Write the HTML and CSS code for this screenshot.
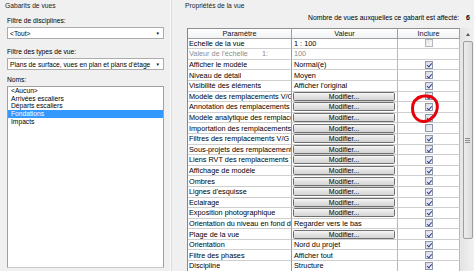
FILE: index.html
```html
<!DOCTYPE html>
<html lang="fr">
<head>
<meta charset="utf-8">
<title>Gabarits de vues</title>
<link rel="stylesheet" href="styles.css">
</head>
<body>
<div class="app">
  <section class="left">
    <div class="group-title">Gabarits de vues</div>
    <div class="left-body">
      <div class="label l1">Filtre de disciplines:</div>
      <div class="combo c1"><span>&lt;Tout&gt;</span><span class="arrow">&#9660;</span></div>
      <div class="label l2">Filtre des types de vue:</div>
      <div class="combo c2"><span>Plans de surface, vues en plan et plans d'étage</span><span class="arrow">&#9660;</span></div>
      <div class="label l3">Noms:</div>
      <ul class="list">
        <li>&lt;Aucun&gt;</li>
        <li>Arrivées escaliers</li>
        <li>Départs escaliers</li>
        <li class="sel">Fondations</li>
        <li>Impacts</li>
      </ul>
    </div>
  </section>
  <div class="splitter"></div>
  <section class="right">
    <div class="group-title">Propriétés de la vue</div>
    <div class="count"><span>Nombre de vues auxquelles ce gabarit est affecté:</span><b>6</b></div>
    <div class="table-wrap">
      <div class="grid">
        <div class="hd">Paramètre</div><div class="hd">Valeur</div><div class="hd">Inclure</div>

        <div class="c p"><span class="t">Echelle de la vue</span></div><div class="c v">1 : 100</div><div class="c i"><span class="cb off dis"></span></div>
        <div class="c p gray"><span class="t">Valeur de l'échelle<span class="tab">1:</span></span></div><div class="c v gray">100</div><div class="c i"></div>
        <div class="c p"><span class="t">Afficher le modèle</span></div><div class="c v">Normal(e)</div><div class="c i"><span class="cb"></span></div>
        <div class="c p"><span class="t">Niveau de détail</span></div><div class="c v">Moyen</div><div class="c i"><span class="cb"></span></div>
        <div class="c p"><span class="t">Visibilité des éléments</span></div><div class="c v">Afficher l'original</div><div class="c i"><span class="cb"></span></div>
        <div class="c p"><span class="t">Modèle des remplacements V/G</span></div><div class="c v"><span class="btn">Modifier...</span></div><div class="c i"><span class="cb"></span></div>
        <div class="c p"><span class="t">Annotation des remplacements</span></div><div class="c v"><span class="btn">Modifier...</span></div><div class="c i"><span class="cb"></span></div>
        <div class="c p"><span class="t">Modèle analytique des remplacements</span></div><div class="c v"><span class="btn">Modifier...</span></div><div class="c i"><span class="cb"></span></div>
        <div class="c p"><span class="t">Importation des remplacements</span></div><div class="c v"><span class="btn">Modifier...</span></div><div class="c i"><span class="cb off"></span></div>
        <div class="c p"><span class="t">Filtres des remplacements V/G</span></div><div class="c v"><span class="btn">Modifier...</span></div><div class="c i"><span class="cb"></span></div>
        <div class="c p"><span class="t">Sous-projets des remplacements</span></div><div class="c v"><span class="btn">Modifier...</span></div><div class="c i"><span class="cb"></span></div>
        <div class="c p"><span class="t">Liens RVT des remplacements V/G</span></div><div class="c v"><span class="btn">Modifier...</span></div><div class="c i"><span class="cb"></span></div>
        <div class="c p"><span class="t">Affichage de modèle</span></div><div class="c v"><span class="btn">Modifier...</span></div><div class="c i"><span class="cb"></span></div>
        <div class="c p"><span class="t">Ombres</span></div><div class="c v"><span class="btn">Modifier...</span></div><div class="c i"><span class="cb"></span></div>
        <div class="c p"><span class="t">Lignes d'esquisse</span></div><div class="c v"><span class="btn">Modifier...</span></div><div class="c i"><span class="cb"></span></div>
        <div class="c p"><span class="t">Eclairage</span></div><div class="c v"><span class="btn">Modifier...</span></div><div class="c i"><span class="cb"></span></div>
        <div class="c p"><span class="t">Exposition photographique</span></div><div class="c v"><span class="btn">Modifier...</span></div><div class="c i"><span class="cb"></span></div>
        <div class="c p"><span class="t">Orientation du niveau en fond de plan</span></div><div class="c v">Regarder vers le bas</div><div class="c i"><span class="cb"></span></div>
        <div class="c p"><span class="t">Plage de la vue</span></div><div class="c v"><span class="btn">Modifier...</span></div><div class="c i"><span class="cb"></span></div>
        <div class="c p"><span class="t">Orientation</span></div><div class="c v">Nord du projet</div><div class="c i"><span class="cb"></span></div>
        <div class="c p"><span class="t">Filtre des phases</span></div><div class="c v">Afficher tout</div><div class="c i"><span class="cb"></span></div>
        <div class="c p"><span class="t">Discipline</span></div><div class="c v">Structure</div><div class="c i"><span class="cb"></span></div>
      </div>
      <div class="scrollbar">
        <div class="sb-up"><span class="up-arrow"></span></div>
        <div class="sb-thumb"><span class="grip"></span></div>
      </div>
      <svg class="mark" width="40" height="32" viewBox="0 0 40 32">
        <path d="M13 4.5 C17 2.5 27 1.5 31 8 C34 14 32 24 22 28 C13 30.5 7.5 23 7.5 15.5 C7.5 9 11 5 17 3.5" fill="none" stroke="#e8000b" stroke-width="3" stroke-linecap="round"/>
      </svg>
    </div>
  </section>
</div>
</body>
</html>
```

FILE: styles.css
```css
* { box-sizing: border-box; }
html, body {
  margin: 0;
  padding: 0;
}
body {
  width: 474px;
  height: 271px;
  overflow: hidden;
  background: #f0f0f0;
  font-family: "Liberation Sans", Arial, sans-serif;
  color: #000;
}
.app {
  display: flex;
  height: 271px;
}

/* ---------- left panel ---------- */
.left {
  width: 172px;
  flex: none;
  border-right: 1px solid #dcdcdc;
  box-shadow: inset -1px 0 0 #fafafa;
}
.group-title {
  height: 12px;
  line-height: 12px;
  font-size: 6.7px;
  color: #222;
  padding-left: 5px;
}
.left-body {
  padding-left: 7px;
  width: 164px;
  font-size: 6.7px;
}
.label {
  height: 10px;
  line-height: 10px;
}
.l1 { margin-top: 4px; }
.l2 { margin-top: 8px; }
.l3 { margin-top: 5px; }
.combo {
  margin-top: 1px;
  height: 12px;
  background: #fff;
  border: 1px solid #acacac;
  display: flex;
  align-items: center;
  justify-content: space-between;
  padding: 0 3px 0 2px;
  white-space: nowrap;
  overflow: hidden;
}
.combo .arrow {
  font-size: 4.5px;
  color: #111;
}
.list {
  list-style: none;
  margin: 1px 0 0;
  padding: 0;
  height: 182px;
  background: #fff;
  border: 1px solid #a0a0a0;
  border-bottom-color: #c8c8c8;
}
.list li {
  height: 7.7px;
  line-height: 7.7px;
  padding-left: 3px;
  white-space: nowrap;
}
.list li.sel {
  background: #3399ff;
  color: #fff;
}

.splitter {
  width: 6px;
  flex: none;
}

/* ---------- right panel ---------- */
.right {
  flex: 1;
  padding-left: 7px;
  display: flex;
  flex-direction: column;
}
.right .group-title { padding-left: 0; }
.count {
  height: 10px;
  line-height: 10px;
  margin-top: 1px;
  font-size: 6.8px;
  display: flex;
  justify-content: flex-end;
  gap: 7px;
  padding-right: 4px;
}
.count b { font-size: 7px; }

.table-wrap {
  position: relative;
  margin-top: 5px;
  margin-left: 2px;
  display: flex;
  flex: 1;
  overflow: hidden;
}
.grid {
  display: grid;
  grid-template-columns: 104px 106px 62px;
  grid-auto-rows: 10.6px;
  border-left: 1px solid #828790;
  background: #fff;
  font-size: 7.3px;
  align-content: start;
}
.hd {
  background: linear-gradient(#ffffff, #f1f2f4);
  border-top: 1px solid #8e8f8f;
  border-right: 1px solid #a0a0a0;
  border-bottom: 1px solid #a0a0a0;
  display: flex;
  align-items: center;
  justify-content: center;
  color: #111;
}
.c {
  border-right: 1px solid #b8b8b8;
  border-bottom: 1px solid #cfcfcf;
  display: flex;
  align-items: center;
  white-space: nowrap;
  overflow: hidden;
  min-width: 0;
}
.c.p { padding-left: 1px; border-right-color: #9a9a9a; }
.c .t {
  display: block;
  overflow: hidden;
  max-width: 100%;
  text-overflow: clip;
}
.c.v { padding-left: 2px; }
.c.i { justify-content: center; }
.gray { color: #8d8d8d; }
.tab { margin-left: 14px; }

.btn {
  width: 102px;
  height: 9px;
  margin-left: -1px;
  border: 1px solid #6f6f6f;
  border-radius: 1.5px;
  background: linear-gradient(#f6f6f6, #e2e2e2 50%, #d4d4d4);
  display: flex;
  align-items: center;
  justify-content: center;
  font-size: 7px;
}

.cb {
  width: 8px;
  height: 8px;
  border: 1px solid #8f98a8;
  background: linear-gradient(135deg, #d9dbe6, #f7f7fa);
  position: relative;
}
.cb::after {
  content: "";
  position: absolute;
  left: 2.2px;
  top: 0.6px;
  width: 1.6px;
  height: 3.8px;
  border-right: 1.3px solid #2e3f9c;
  border-bottom: 1.3px solid #2e3f9c;
  transform: rotate(40deg);
}
.cb.off::after { display: none; }
.cb.dis {
  border-color: #b4b8c0;
  background: linear-gradient(135deg, #e6e6e6, #f8f8f8);
}

.scrollbar {
  width: 14px;
  flex: none;
  background: linear-gradient(90deg, #e4e4e4, #f2f2f2);
  border-left: 1px solid #e8e8e8;
  display: flex;
  flex-direction: column;
  align-items: center;
}
.sb-up {
  height: 13px;
  width: 100%;
  display: flex;
  align-items: center;
  justify-content: center;
}
.up-arrow {
  width: 0;
  height: 0;
  border-left: 2.5px solid transparent;
  border-right: 2.5px solid transparent;
  border-bottom: 3px solid #555;
}
.sb-thumb {
  width: 10px;
  height: 198px;
  border: 1px solid #9e9e9e;
  border-radius: 2px;
  background: linear-gradient(90deg, #ececec, #dcdcdc);
  display: flex;
  align-items: center;
  justify-content: center;
}
.grip {
  width: 5px;
  height: 5px;
  border-top: 1px solid #8a8a8a;
  border-bottom: 1px solid #8a8a8a;
  position: relative;
}
.grip::after {
  content: "";
  position: absolute;
  left: 0;
  right: 0;
  top: 1px;
  border-top: 1px solid #8a8a8a;
}

.mark {
  position: absolute;
  left: 218px;
  top: 65px;
}
```
